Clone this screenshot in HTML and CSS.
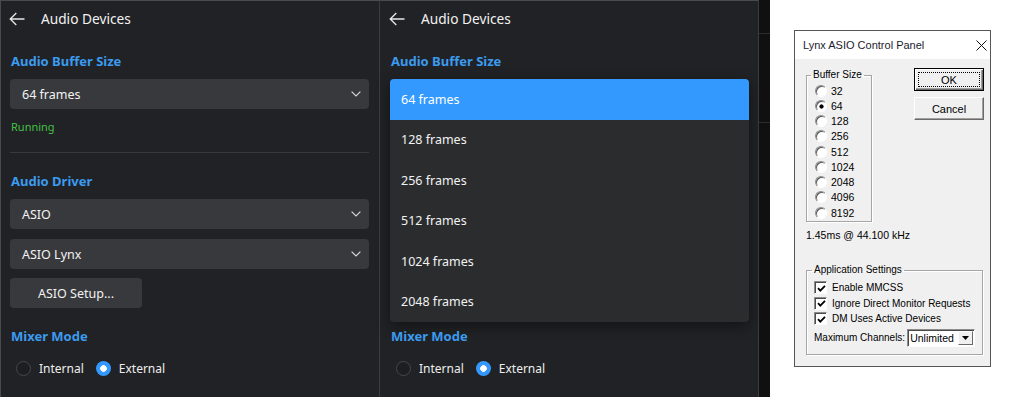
FILE: index.html
```html
<!DOCTYPE html>
<html>
<head>
<meta charset="utf-8">
<title>Audio Devices</title>
<link rel="stylesheet" href="styles.css">
</head>
<body>
<div class="panel panel-first">
  <div class="header">
    <svg class="back" width="16" height="14" viewBox="0 0 16 14"><path d="M15.5 7H1.2M7.3 1L1.2 7L7.3 13" fill="none" stroke="#e8e8e8" stroke-width="1.3"/></svg>
    <span class="title">Audio Devices</span>
  </div>
  <div class="section-label">Audio Buffer Size</div>
  <div class="select select-first"><span>64 frames</span><svg class="chev" width="10" height="6" viewBox="0 0 10 6"><path d="M0.6 0.6L5 5L9.4 0.6" fill="none" stroke="#d6d6d6" stroke-width="1.2"/></svg></div>
  <div class="status">Running</div>
  <div class="divider"></div>
  <div class="section-label label-driver">Audio Driver</div>
  <div class="select select-first"><span>ASIO</span><svg class="chev" width="10" height="6" viewBox="0 0 10 6"><path d="M0.6 0.6L5 5L9.4 0.6" fill="none" stroke="#d6d6d6" stroke-width="1.2"/></svg></div>
  <div class="select select-next"><span>ASIO Lynx</span><svg class="chev" width="10" height="6" viewBox="0 0 10 6"><path d="M0.6 0.6L5 5L9.4 0.6" fill="none" stroke="#d6d6d6" stroke-width="1.2"/></svg></div>
  <div class="btn">ASIO Setup...</div>
  <div class="section-label label-mixer">Mixer Mode</div>
  <div class="radios">
    <span class="radio"></span><span class="radio-text">Internal</span>
    <span class="radio radio-on"></span><span class="radio-text">External</span>
  </div>
</div>

<div class="panel panel-second">
  <div class="header">
    <svg class="back" width="16" height="14" viewBox="0 0 16 14"><path d="M15.5 7H1.2M7.3 1L1.2 7L7.3 13" fill="none" stroke="#e8e8e8" stroke-width="1.3"/></svg>
    <span class="title">Audio Devices</span>
  </div>
  <div class="section-label">Audio Buffer Size</div>
  <div class="menu">
    <div class="menu-item menu-item-on">64 frames</div>
    <div class="menu-item">128 frames</div>
    <div class="menu-item">256 frames</div>
    <div class="menu-item">512 frames</div>
    <div class="menu-item">1024 frames</div>
    <div class="menu-item">2048 frames</div>
  </div>
  <div class="section-label label-after-menu">Mixer Mode</div>
  <div class="radios">
    <span class="radio"></span><span class="radio-text">Internal</span>
    <span class="radio radio-on"></span><span class="radio-text">External</span>
  </div>
</div>

<div class="strip">
  <div class="strip-line strip-line-a"></div>
  <div class="strip-line strip-line-b"></div>
</div>

<div class="desk">
  <div class="dialog">
    <div class="dlg-title">
      <span>Lynx ASIO Control Panel</span>
      <svg class="dlg-close" width="11" height="11" viewBox="0 0 11 11"><path d="M0.5 0.5L10.5 10.5M10.5 0.5L0.5 10.5" stroke="#111" stroke-width="1"/></svg>
    </div>
    <div class="dlg-body">
      <div class="dlg-top">
        <fieldset class="group group-buffer">
          <legend>Buffer Size</legend>
          <div class="opt"><span class="c-radio"></span>32</div>
          <div class="opt"><span class="c-radio c-radio-on"></span>64</div>
          <div class="opt"><span class="c-radio"></span>128</div>
          <div class="opt"><span class="c-radio"></span>256</div>
          <div class="opt"><span class="c-radio"></span>512</div>
          <div class="opt"><span class="c-radio"></span>1024</div>
          <div class="opt"><span class="c-radio"></span>2048</div>
          <div class="opt"><span class="c-radio"></span>4096</div>
          <div class="opt"><span class="c-radio"></span>8192</div>
        </fieldset>
        <div class="dlg-buttons">
          <div class="c-btn c-btn-default"><span class="focus">OK</span></div>
          <div class="c-btn">Cancel</div>
        </div>
      </div>
      <div class="rate">1.45ms @ 44.100 kHz</div>
      <fieldset class="group group-app">
        <legend>Application Settings</legend>
        <div class="chk-row"><span class="c-check"><svg width="9" height="9" viewBox="0 0 9 9"><path d="M1 4.2L3.3 6.6L8 1.8" fill="none" stroke="#000" stroke-width="1.8"/></svg></span>Enable MMCSS</div>
        <div class="chk-row"><span class="c-check"><svg width="9" height="9" viewBox="0 0 9 9"><path d="M1 4.2L3.3 6.6L8 1.8" fill="none" stroke="#000" stroke-width="1.8"/></svg></span>Ignore Direct Monitor Requests</div>
        <div class="chk-row"><span class="c-check"><svg width="9" height="9" viewBox="0 0 9 9"><path d="M1 4.2L3.3 6.6L8 1.8" fill="none" stroke="#000" stroke-width="1.8"/></svg></span>DM Uses Active Devices</div>
        <div class="max-row">
          <span>Maximum Channels:</span>
          <div class="c-select"><span class="c-select-text">Unlimited</span><span class="c-select-btn"><svg width="7" height="4" viewBox="0 0 7 4"><path d="M0 0H7L3.5 4Z" fill="#000"/></svg></span></div>
        </div>
      </fieldset>
    </div>
  </div>
</div>
</body>
</html>
```

FILE: styles.css
```css
* { box-sizing: border-box; }

html, body {
  margin: 0;
  padding: 0;
}

body {
  width: 1024px;
  height: 397px;
  overflow: hidden;
  display: flex;
  background: #ffffff;
  font-family: "Noto Sans", "DejaVu Sans", sans-serif;
}

/* ---------- dark settings panels ---------- */
.panel {
  width: 379px;
  height: 397px;
  background: #212225;
  border-top: 1px solid #4a4b4e;
  border-right: 1px solid #3b3c3f;
  padding: 0 9px 0 10px;
  color: #f1f1f1;
  flex: none;
}

.panel-first {
  width: 380px;
  border-left: 1px solid #4a4b4e;
  padding-left: 9px;
  padding-right: 10px;
}

.header {
  height: 35px;
  display: flex;
  align-items: center;
}

.back {
  margin-left: -1px;
  display: block;
}

.title {
  margin-left: 16px;
  font-size: 13.7px;
  color: #f2f2f2;
}

.section-label {
  margin-top: 15px;
  height: 20px;
  line-height: 20px;
  font-size: 13px;
  font-weight: 700;
  color: #3b9bef;
  padding-left: 1px;
}

.label-driver { margin-top: 18px; }
.label-mixer { margin-top: 18px; }
.label-after-menu { margin-top: 4px; }

.select {
  height: 30px;
  border-radius: 4px;
  background: #38393c;
  display: flex;
  align-items: center;
  justify-content: space-between;
  padding: 0 8px 0 12px;
  font-size: 12.5px;
  color: #f2f2f2;
}

.select-first { margin-top: 8px; }
.select-next { margin-top: 10px; }

.chev { display: block; }

.status {
  margin-top: 10px;
  height: 16px;
  line-height: 16px;
  font-size: 11px;
  color: #45c045;
  padding-left: 1px;
}

.divider {
  margin-top: 17px;
  height: 1px;
  background: #38393c;
}

.btn {
  margin-top: 9px;
  width: 132px;
  height: 30px;
  border-radius: 4px;
  background: #38393c;
  display: flex;
  align-items: center;
  justify-content: center;
  font-size: 12.5px;
  color: #f2f2f2;
}

.radios {
  margin-top: 12px;
  height: 20px;
  display: flex;
  align-items: center;
  padding-left: 6px;
  font-size: 12px;
}

.radio {
  width: 15px;
  height: 15px;
  border-radius: 50%;
  border: 1.5px solid #47484b;
  background: #1d1e20;
  flex: none;
}

.radio-on {
  border: none;
  background: radial-gradient(circle, #ffffff 0 3px, #3399ff 3.6px);
}

.radio-text {
  margin-left: 8px;
  margin-right: 12px;
  color: #eeeeee;
}

/* open dropdown list */
.menu {
  margin-top: 8px;
  height: 243px;
  background: #2b2c2e;
  border-radius: 4px;
  overflow: hidden;
  box-shadow: 0 4px 14px rgba(0, 0, 0, 0.45);
}

.menu-item {
  height: 40.5px;
  display: flex;
  align-items: center;
  padding-left: 11px;
  font-size: 12.5px;
  color: #f2f2f2;
}

.menu-item-on {
  background: #3399ff;
  color: #ffffff;
}

/* ---------- separator strip ---------- */
.strip {
  width: 11px;
  height: 397px;
  background: #101011;
  flex: none;
  display: flex;
  flex-direction: column;
}

.strip-line {
  height: 1px;
  background: #2c2c2e;
}

.strip-line-a { margin-top: 33px; }
.strip-line-b { margin-top: 88px; }

/* ---------- classic Win32 dialog ---------- */
.desk {
  flex: 1;
  height: 397px;
  background: #ffffff;
  padding: 30px 0 0 24px;
}

.dialog {
  width: 197px;
  height: 337px;
  border: 1px solid #565656;
  background: #f0f0f0;
  font-family: "Liberation Sans", Arial, sans-serif;
  font-size: 10px;
  color: #000;
  display: flex;
  flex-direction: column;
}

.dlg-title {
  height: 28px;
  background: #ffffff;
  display: flex;
  align-items: center;
  justify-content: space-between;
  padding: 0 3px 0 8px;
  font-size: 11px;
  color: #1b1b2f;
  flex: none;
}

.dlg-close { display: block; }

.dlg-body {
  padding: 0 0 0 11px;
}

.dlg-top {
  display: flex;
  margin-top: 9px;
}

.group {
  margin: 0;
  min-width: 0;
  border: 1px solid #a6a6a6;
  box-shadow: inset 1px 1px 0 #ffffff, 1px 1px 0 #ffffff;
  padding: 0;
  flex: none;
}

.group legend {
  margin-left: 4px;
  padding: 0 2px;
  font-size: 10px;
  line-height: 12px;
  white-space: nowrap;
}

.group-buffer {
  width: 66px;
  height: 153px;
  margin-top: 1px;
  padding-top: 2px;
}

.opt {
  height: 15.25px;
  display: flex;
  align-items: center;
  padding-left: 8px;
  font-size: 10.5px;
}

.c-radio {
  width: 12px;
  height: 12px;
  border-radius: 50%;
  border: 1px solid;
  border-color: #8c8c8c #ffffff #ffffff #8c8c8c;
  box-shadow: inset 1px 1px 0 #5a5a5a;
  background: #ffffff;
  margin-right: 4px;
  flex: none;
}

.c-radio-on {
  background: radial-gradient(circle at 55% 55%, #000 0 1.8px, #ffffff 2.4px);
}

.dlg-buttons {
  margin-left: 42px;
  display: flex;
  flex-direction: column;
  gap: 6px;
}

.c-btn {
  width: 70px;
  height: 23px;
  background: #f0f0f0;
  border: 1px solid;
  border-color: #ffffff #6a6a6a #6a6a6a #ffffff;
  box-shadow: inset -1px -1px 0 #a0a0a0;
  display: flex;
  align-items: center;
  justify-content: center;
  font-size: 11px;
}

.c-btn-default {
  border: 1px solid #000;
  box-shadow: inset 1px 1px 0 #ffffff, inset -1px -1px 0 #6a6a6a, inset -2px -2px 0 #a0a0a0;
  padding: 3px;
}

.focus {
  flex: 1;
  align-self: stretch;
  border: 1px dotted #000;
  display: flex;
  align-items: center;
  justify-content: center;
}

.rate {
  margin-top: 7px;
  height: 13px;
  line-height: 13px;
  font-size: 10.5px;
}

.group-app {
  width: 177px;
  height: 91px;
  margin-top: 22px;
  padding-top: 4px;
}

.group-app legend { margin-left: 5px; }

.chk-row {
  height: 15.5px;
  display: flex;
  align-items: center;
  padding-left: 7px;
  font-size: 10px;
}

.c-check {
  width: 13px;
  height: 13px;
  border: 1px solid;
  border-color: #8c8c8c #ffffff #ffffff #8c8c8c;
  box-shadow: inset 1px 1px 0 #4a4a4a;
  background: #ffffff;
  display: flex;
  align-items: center;
  justify-content: center;
  margin-right: 5px;
  flex: none;
}

.c-check svg { display: block; margin: 1px 0 0 1px; }

.max-row {
  margin-top: 1px;
  height: 20px;
  display: flex;
  align-items: center;
  padding-left: 7px;
  font-size: 10px;
}

.c-select {
  margin-left: 2px;
  width: 68px;
  height: 18px;
  background: #ffffff;
  border: 1px solid;
  border-color: #8c8c8c #ffffff #ffffff #8c8c8c;
  box-shadow: inset 1px 1px 0 #4a4a4a;
  display: flex;
  align-items: center;
  justify-content: space-between;
  padding: 1px 1px 1px 2px;
}

.c-select-text { font-size: 10.5px; }

.c-select-btn {
  width: 15px;
  height: 14px;
  background: #f0f0f0;
  border: 1px solid;
  border-color: #ffffff #6a6a6a #6a6a6a #ffffff;
  display: flex;
  align-items: center;
  justify-content: center;
}

.c-select-btn svg { display: block; }
```
